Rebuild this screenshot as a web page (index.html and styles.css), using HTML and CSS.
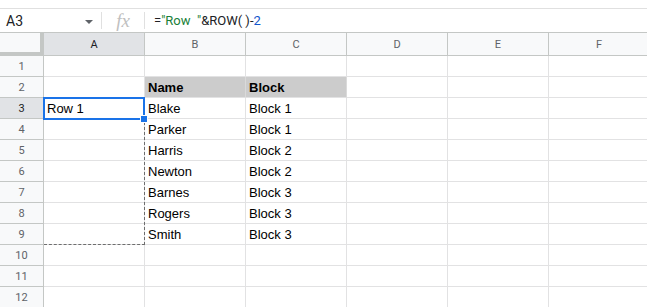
FILE: index.html
```html
<!DOCTYPE html>
<html lang="en">
<head>
  <meta charset="UTF-8">
  <title>Sheet</title>
  <link rel="stylesheet" href="styles.css">
</head>
<body>
  <div class="formula-bar">
    <div class="name-box">
      <span class="cell-ref">A3</span>
      <span class="drop"></span>
    </div>
    <div class="sep"></div>
    <div class="fx">fx</div>
    <div class="sep"></div>
    <div class="formula">=<span class="str">"Row  "</span>&amp;ROW( )-<span class="num">2</span></div>
  </div>

  <div class="sheet">
    <div class="grid">
      <div class="corner"></div>
      <div class="col-head sel">A</div>
      <div class="col-head">B</div>
      <div class="col-head">C</div>
      <div class="col-head">D</div>
      <div class="col-head">E</div>
      <div class="col-head">F</div>

      <div class="row-head">1</div>
      <div class="cell"></div><div class="cell"></div><div class="cell"></div><div class="cell"></div><div class="cell"></div><div class="cell"></div>

      <div class="row-head">2</div>
      <div class="cell"></div><div class="cell th">Name</div><div class="cell th">Block</div><div class="cell"></div><div class="cell"></div><div class="cell"></div>

      <div class="row-head sel">3</div>
      <div class="cell">Row 1</div><div class="cell">Blake</div><div class="cell">Block 1</div><div class="cell"></div><div class="cell"></div><div class="cell"></div>

      <div class="row-head">4</div>
      <div class="cell"></div><div class="cell">Parker</div><div class="cell">Block 1</div><div class="cell"></div><div class="cell"></div><div class="cell"></div>

      <div class="row-head">5</div>
      <div class="cell"></div><div class="cell">Harris</div><div class="cell">Block 2</div><div class="cell"></div><div class="cell"></div><div class="cell"></div>

      <div class="row-head">6</div>
      <div class="cell"></div><div class="cell">Newton</div><div class="cell">Block 2</div><div class="cell"></div><div class="cell"></div><div class="cell"></div>

      <div class="row-head">7</div>
      <div class="cell"></div><div class="cell">Barnes</div><div class="cell">Block 3</div><div class="cell"></div><div class="cell"></div><div class="cell"></div>

      <div class="row-head">8</div>
      <div class="cell"></div><div class="cell">Rogers</div><div class="cell">Block 3</div><div class="cell"></div><div class="cell"></div><div class="cell"></div>

      <div class="row-head">9</div>
      <div class="cell"></div><div class="cell">Smith</div><div class="cell">Block 3</div><div class="cell"></div><div class="cell"></div><div class="cell"></div>

      <div class="row-head">10</div>
      <div class="cell"></div><div class="cell"></div><div class="cell"></div><div class="cell"></div><div class="cell"></div><div class="cell"></div>

      <div class="row-head">11</div>
      <div class="cell"></div><div class="cell"></div><div class="cell"></div><div class="cell"></div><div class="cell"></div><div class="cell"></div>

      <div class="row-head">12</div>
      <div class="cell"></div><div class="cell"></div><div class="cell"></div><div class="cell"></div><div class="cell"></div><div class="cell"></div>
    </div>

    <!-- copy range A3:A9 and active cell -->
    <div class="copy-range"></div>
    <div class="active-cell"><span class="handle"></span></div>
  </div>
</body>
</html>
```

FILE: styles.css
```css
html {
  background: #ffffff;
}

body {
  margin: 0;
  padding-top: 8px;
  font-family: 'Liberation Sans', Arial, sans-serif;
  color: #000;
  overflow: hidden;
  width: 647px;
  height: 307px;
}

.formula-bar {
  display: flex;
  align-items: center;
  height: 23px;
  border-top: 1px solid #e0e0e0;
  border-bottom: 1px solid #c4c7c5;
}

.name-box {
  display: flex;
  align-items: center;
  justify-content: space-between;
  width: 87px;
  padding: 0 8px 0 6px;
}

.cell-ref {
  font-family: Roboto, 'Liberation Sans', sans-serif;
  font-size: 14px;
  color: #202124;
}

.drop {
  width: 0;
  height: 0;
  border-left: 4px solid transparent;
  border-right: 4px solid transparent;
  border-top: 4px solid #5f6368;
  margin-top: 2px;
}

.sep {
  width: 1px;
  height: 17px;
  background: #e0e0e0;
}

.fx {
  width: 42px;
  text-align: center;
  font-family: 'Liberation Serif', serif;
  font-style: italic;
  font-size: 19px;
  color: #c0c0c0;
  line-height: 20px;
}

.formula {
  padding-left: 9px;
  font-family: Roboto, 'Liberation Sans', sans-serif;
  font-size: 13px;
  color: #202124;
  white-space: pre;
}

.formula .str {
  color: #188038;
}

.formula .num {
  color: #1155cc;
}

.sheet {
  position: relative;
}

.grid {
  display: grid;
  grid-template-columns: 44px repeat(6, 101px);
  grid-auto-rows: 21px;
  grid-template-rows: 23px;
}

.corner {
  background: #f8f9fa;
  border-right: 4px solid #c4c7c5;
  border-bottom: 4px solid #c4c7c5;
  box-sizing: border-box;
}

.col-head {
  display: flex;
  align-items: center;
  justify-content: center;
  background: #f8f9fa;
  border-right: 1px solid #c4c7c5;
  border-bottom: 1px solid #c4c7c5;
  box-sizing: border-box;
  font-family: Roboto, 'Liberation Sans', sans-serif;
  font-size: 11px;
  color: #5f6368;
  padding-top: 1px;
}

.row-head {
  display: flex;
  align-items: center;
  justify-content: center;
  background: #f8f9fa;
  border-right: 1px solid #c4c7c5;
  border-bottom: 1px solid #c4c7c5;
  box-sizing: border-box;
  font-family: Roboto, 'Liberation Sans', sans-serif;
  font-size: 11px;
  color: #5f6368;
}

.col-head.sel,
.row-head.sel {
  background: #e1e3e6;
  color: #202124;
}

.cell {
  border-right: 1px solid #e2e2e3;
  border-bottom: 1px solid #e2e2e3;
  box-sizing: border-box;
  padding: 1px 3px 0;
  font-size: 13px;
  line-height: 19px;
  white-space: nowrap;
  overflow: hidden;
}

.cell.th {
  background: #cccccc;
  font-weight: bold;
  border-right-color: #dadada;
}

.copy-range {
  position: absolute;
  left: 44px;
  top: 64px;
  width: 101px;
  height: 148px;
  border: 1px dashed #6e6e6e;
  border-left: none;
  box-sizing: border-box;
}

.active-cell {
  position: absolute;
  left: 43px;
  top: 64px;
  width: 102px;
  height: 23px;
  border: 2px solid #1a73e8;
  box-sizing: border-box;
}

.handle {
  position: absolute;
  right: -5px;
  bottom: -5px;
  width: 6px;
  height: 6px;
  background: #1a73e8;
  border: 1px solid #ffffff;
}
```
